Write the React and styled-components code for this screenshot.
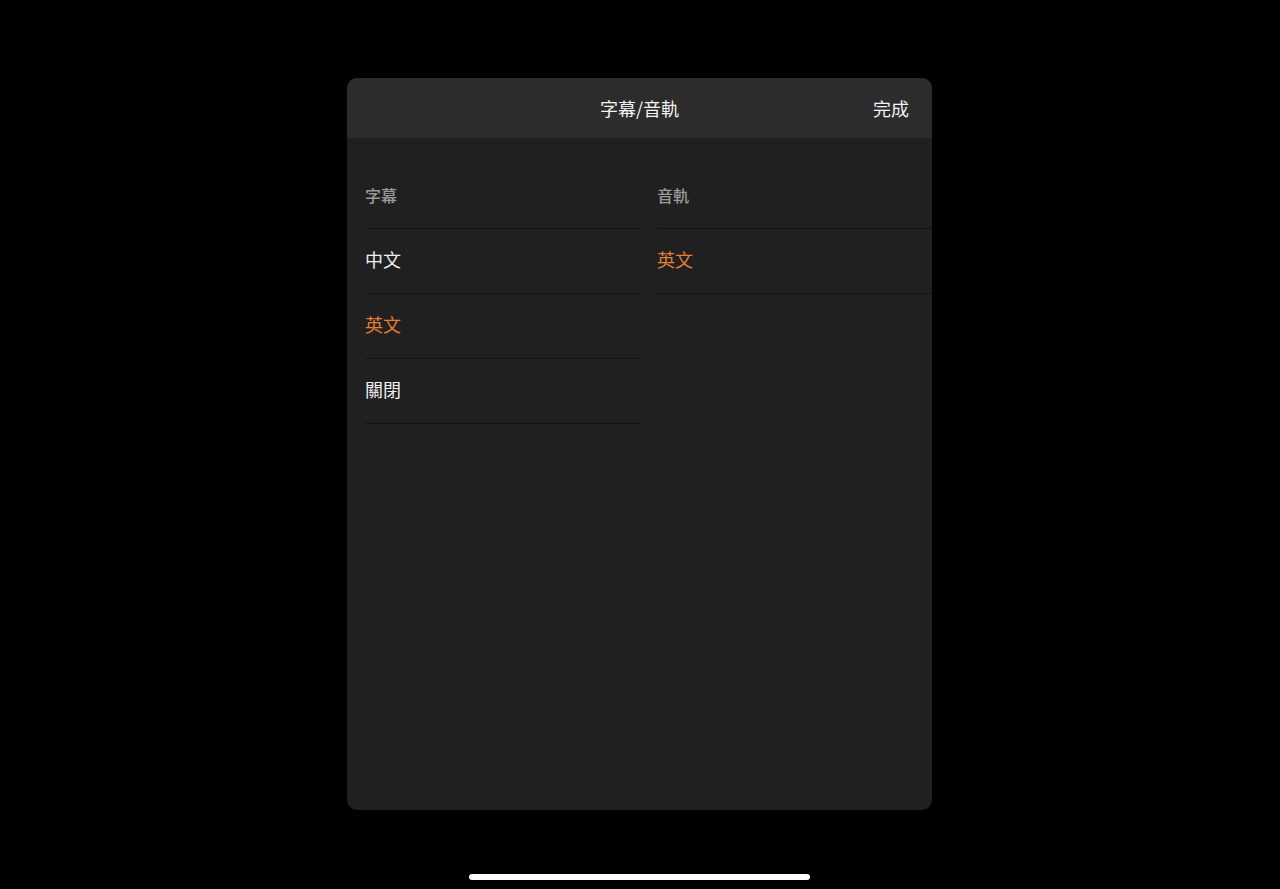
import React from "react";
import styled, { createGlobalStyle } from "styled-components";

const Global = createGlobalStyle`
  html, body { margin: 0; padding: 0; background: #000; }
  body { font-family: "Noto Sans CJK TC", "Noto Sans", sans-serif; }
  #root { height: 889px; }
`;

const Screen = styled.div`
  width: 1280px;
  height: 889px;
  background: #000;
  display: flex;
  flex-direction: column;
  align-items: center;
  padding: 78px 1px 0 0;
  box-sizing: border-box;
`;

const Sheet = styled.div`
  width: 585px;
  height: 732px;
  background: #202020;
  border-radius: 10px;
  overflow: hidden;
  display: flex;
  flex-direction: column;
`;

const NavBar = styled.div`
  height: 60px;
  background: #2c2c2c;
  display: grid;
  grid-template-columns: 1fr auto 1fr;
  align-items: center;
  padding: 0 23px;
  flex-shrink: 0;
`;

const Title = styled.div`
  grid-column: 2;
  color: #f2f2f2;
  font-size: 18px;
  line-height: 1;
`;

const Done = styled.div`
  grid-column: 3;
  justify-self: end;
  color: #f2f2f2;
  font-size: 18px;
  line-height: 1;
`;

const Body = styled.div`
  display: grid;
  grid-template-columns: 275px 275px;
  column-gap: 17px;
  padding: 26px 0 0 18px;
  align-items: start;
`;

const Column = styled.div`
  display: flex;
  flex-direction: column;
`;

const SectionLabel = styled.div`
  height: 65px;
  display: flex;
  align-items: center;
  color: #9a9a9a;
  font-size: 16px;
  font-weight: 500;
  border-bottom: 1px solid #131313;
  box-sizing: border-box;
  padding-bottom: 3px;
`;

const Row = styled.div`
  height: 65px;
  display: flex;
  align-items: center;
  font-size: 18px;
  color: ${(p) => (p.$active ? "#e57f36" : "#f0f0f0")};
  border-bottom: 1px solid #131313;
  box-sizing: border-box;
  padding-bottom: 4px;
`;

const HomeIndicator = styled.div`
  margin-top: 64px;
  width: 341px;
  height: 6px;
  border-radius: 3px;
  background: #fff;
`;

const subtitles = [
  { label: "中文", active: false },
  { label: "英文", active: true },
  { label: "關閉", active: false },
];

const audio = [{ label: "英文", active: true }];

export default function App() {
  return (
    <>
      <Global />
      <Screen>
        <Sheet>
          <NavBar>
            <Title>字幕/音軌</Title>
            <Done>完成</Done>
          </NavBar>
          <Body>
            <Column>
              <SectionLabel>字幕</SectionLabel>
              {subtitles.map((s) => (
                <Row key={s.label} $active={s.active}>
                  {s.label}
                </Row>
              ))}
            </Column>
            <Column>
              <SectionLabel>音軌</SectionLabel>
              {audio.map((s) => (
                <Row key={s.label} $active={s.active}>
                  {s.label}
                </Row>
              ))}
            </Column>
          </Body>
        </Sheet>
        <HomeIndicator />
      </Screen>
    </>
  );
}
